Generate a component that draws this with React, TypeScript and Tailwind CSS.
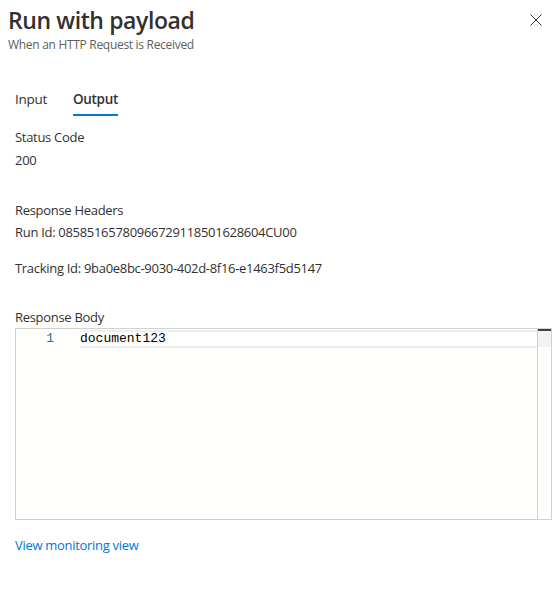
import { useState } from "react";

const font = { fontFamily: '"Open Sans", "Noto Sans", sans-serif' };
const mono = { fontFamily: '"Liberation Mono", monospace' };

export default function App() {
  const [tab, setTab] = useState("output");

  return (
    <div className="w-[560px] h-[614px] bg-white text-[#323130] relative" style={font}>
      <div className="flex justify-between pl-2 pr-[18px] pt-[4px]">
        <div className="flex flex-col">
          <h1 className="text-[23px] leading-[32px] font-semibold tracking-[-0.4px]">
            Run with payload
          </h1>
          <p className="mt-[1px] text-[12px] leading-[16px] text-[#605e5c] tracking-[-0.3px]">
            When an HTTP Request is Received
          </p>
        </div>
        <button className="mt-[10px] w-[12px] h-[12px] text-[#323130]">
          <svg width="12" height="12" viewBox="0 0 12 12">
            <path d="M0.5 0.5 L11.5 11.5 M11.5 0.5 L0.5 11.5" stroke="currentColor" strokeWidth="1" />
          </svg>
        </button>
      </div>

      <div className="px-[15px]">
        <div className="flex gap-[26px] mt-[36px] text-[13.5px] leading-[20px] tracking-[-0.3px]">
          <button
            onClick={() => setTab("input")}
            className={`pb-[5px] border-b-2 ${tab === "input" ? "border-[#0078d4] font-semibold" : "border-transparent"}`}
          >
            Input
          </button>
          <button
            onClick={() => setTab("output")}
            className={`pb-[5px] border-b-2 ${tab === "output" ? "border-[#0078d4] font-semibold" : "border-transparent"}`}
          >
            Output
          </button>
        </div>

        <div className="flex flex-col text-[13px] leading-[20px] tracking-[-0.3px]">
          <div className="mt-[11px]">Status Code</div>
          <div className="mt-[3px]">200</div>

          <div className="mt-[30px]">Response Headers</div>
          <div className="mt-[2px]">Run Id: 08585165780966729118501628604CU00</div>
          <div className="mt-[16px]">Tracking Id: 9ba0e8bc-9030-402d-8f16-e1463f5d5147</div>

          <div className="mt-[29px]">Response Body</div>
        </div>

        <div className="mt-[1px] w-[537px] h-[192px] border border-[#d1d1d1] bg-[#fffffe] flex">
          <div className="flex-1 pt-[1px]">
            <div className="flex h-[18px] items-center">
              <div className="w-[64px] pr-[26px] text-right text-[13px] text-[#237893]" style={mono}>
                1
              </div>
              <div
                className="flex-1 h-[18px] border-y-2 border-[#eeeeee] flex items-center text-[13px] text-black"
                style={mono}
              >
                document123
              </div>
            </div>
          </div>
          <div className="w-[14px] border-l border-[#d1d1d1] flex flex-col">
            <div className="h-[2px] bg-[#424242]" />
            <div className="h-[16px] bg-[#f3f3f3]" />
          </div>
        </div>

        <a className="block mt-[15px] text-[13px] leading-[20px] text-[#0078d4] tracking-[-0.3px] cursor-pointer">
          View monitoring view
        </a>
      </div>
    </div>
  );
}
